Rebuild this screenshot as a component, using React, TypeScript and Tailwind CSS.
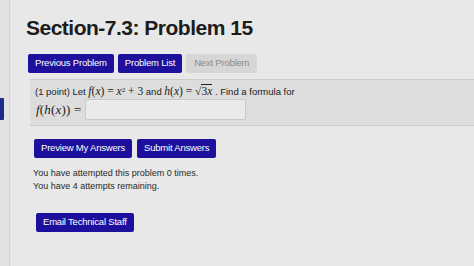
export default function App() {
  const btn =
    "h-[19px] px-[7px] rounded-[2px] bg-[#1c109c] text-white text-[9.5px] flex items-center tracking-[-0.2px]";
  const serif = { fontFamily: '"Liberation Serif", serif' };

  return (
    <div
      className="w-[474px] h-[266px] flex bg-[#e7e8e7] overflow-hidden"
      style={{ fontFamily: '"Liberation Sans", Arial, sans-serif' }}
    >
      {/* left sidebar edge */}
      <div className="w-[10px] shrink-0 bg-[#e0e1e0] border-r border-[#d2d3d2] pt-[98px]">
        <div className="w-[4px] h-[22px] bg-[#1c2a8c] rounded-r-[1px]" />
      </div>

      <div className="flex-1 flex flex-col pl-[16px]">
        <h1 className="mt-[15px] text-[21px] font-bold leading-[26px] tracking-[-0.5px] text-[#1c1c1c]">
          Section-7.3: Problem 15
        </h1>

        <div className="mt-[13px] flex gap-[4px] pl-[2px]">
          <button className={btn}>Previous Problem</button>
          <button className={btn}>Problem List</button>
          <button className="h-[19px] px-[8px] rounded-[2px] bg-[#d5d6d5] text-[#8a8b8a] text-[9.5px] flex items-center tracking-[-0.2px]">
            Next Problem
          </button>
        </div>

        <div className="mt-[6px] ml-[4px] bg-[#dcdddc] border-y border-[#cbcccb] pl-[5px] pt-[4px] pb-[5px] text-[9.5px] text-[#222]">
          <div className="flex items-baseline leading-[14px]">
            <span>(1 point) Let&nbsp;</span>
            <span className="text-[11.5px]" style={serif}>
              <i>f</i>(<i>x</i>) = <i>x</i>
              <sup className="text-[7px]">2</sup> + 3
            </span>
            <span>&nbsp;and&nbsp;</span>
            <span className="text-[11.5px]" style={serif}>
              <i>h</i>(<i>x</i>) = √<span className="border-t border-[#222] leading-[11px]">3<i>x</i></span>
            </span>
            <span>&nbsp;. Find a formula for</span>
          </div>
          <div className="flex items-center gap-[3px]">
            <span className="text-[13px] pl-[1px] tracking-[0.2px]" style={serif}>
              <i>f</i>(<i>h</i>(<i>x</i>)) =
            </span>
            <div className="w-[161px] h-[21px] bg-[#e9eae9] border border-[#c9cac9] rounded-[2px]" />
          </div>
        </div>

        <div className="mt-[13px] ml-[8px] flex gap-[5px]">
          <button className={btn}>Preview My Answers</button>
          <button className={btn}>Submit Answers</button>
        </div>

        <div className="mt-[9px] ml-[7px] text-[9px] leading-[13px] text-[#2a2a2a]">
          <p>You have attempted this problem 0 times.</p>
          <p>You have 4 attempts remaining.</p>
        </div>

        <div className="mt-[20px] ml-[10px] flex">
          <button className={btn}>Email Technical Staff</button>
        </div>
      </div>
    </div>
  );
}
